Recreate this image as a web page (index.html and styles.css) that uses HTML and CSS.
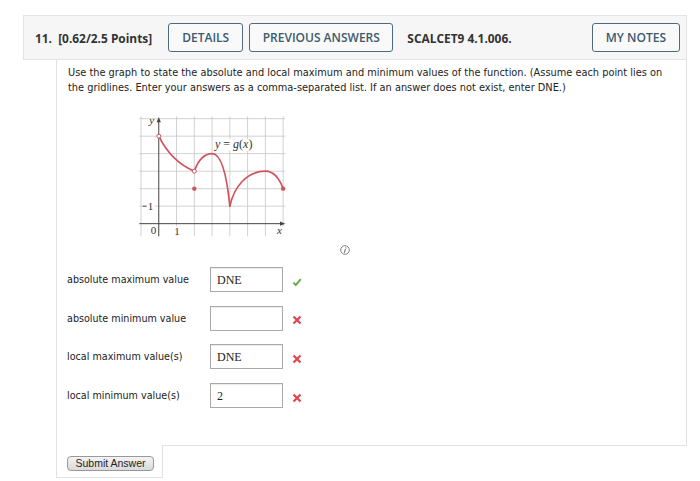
FILE: index.html
```html
<!DOCTYPE html>
<html>
<head>
<meta charset="utf-8">
<link rel="stylesheet" href="styles.css">
</head>
<body>
<div class="page">
  <div class="header">
    <span class="qnum">11.&nbsp; [0.62/2.5 Points]</span>
    <span class="btn btn-details">DETAILS</span>
    <span class="btn btn-prev">PREVIOUS ANSWERS</span>
    <span class="qid">SCALCET9 4.1.006.</span>
    <span class="btn btn-notes">MY NOTES</span>
  </div>
  <div class="content">
    <p class="prompt">Use the graph to state the absolute and local maximum and minimum values of the function. (Assume each point lies on the gridlines. Enter your answers as a comma-separated list. If an answer does not exist, enter DNE.)</p>
    <div class="figure-row">
      <svg class="graph" width="170" height="140" viewBox="0 0 510 420">
        <g stroke="#c8c8c8" stroke-width="2.5">
          <line x1="33" y1="28" x2="33" y2="388"/>
          <line x1="139.6" y1="28" x2="139.6" y2="388"/>
          <line x1="192.9" y1="28" x2="192.9" y2="388"/>
          <line x1="246.2" y1="28" x2="246.2" y2="388"/>
          <line x1="299.5" y1="28" x2="299.5" y2="388"/>
          <line x1="352.8" y1="28" x2="352.8" y2="388"/>
          <line x1="406.1" y1="28" x2="406.1" y2="388"/>
          <line x1="459.4" y1="28" x2="459.4" y2="388"/>
          <line x1="28" y1="35" x2="466" y2="35"/>
          <line x1="28" y1="87.5" x2="466" y2="87.5"/>
          <line x1="28" y1="140" x2="466" y2="140"/>
          <line x1="28" y1="192.5" x2="466" y2="192.5"/>
          <line x1="28" y1="245" x2="466" y2="245"/>
          <line x1="28" y1="297.5" x2="466" y2="297.5"/>
        </g>
        <rect x="252" y="96" width="124" height="36" fill="#fff"/>
        <rect x="44" y="284" width="30" height="28" fill="#fff"/>
        <rect x="58" y="356" width="24" height="28" fill="#fff"/>
        <rect x="128" y="358" width="22" height="28" fill="#fff"/>
        <rect x="436" y="358" width="26" height="28" fill="#fff"/>
        <g stroke="#444" stroke-width="3">
          <line x1="86.3" y1="388" x2="86.3" y2="42"/>
          <line x1="28" y1="350" x2="452" y2="350"/>
          <line x1="38" y1="297.5" x2="50" y2="297.5"/>
        </g>
        <polygon points="86.3,30 80,46 92.6,46" fill="#444"/>
        <polygon points="466,350 450,343.7 450,356.3" fill="#444"/>
        <g font-family="'Liberation Serif', serif" fill="#333" font-size="33">
          <text x="58" y="52" font-style="italic">y</text>
          <text x="255" y="124" font-size="36"><tspan font-style="italic">y</tspan> = <tspan font-style="italic">g</tspan>(<tspan font-style="italic">x</tspan>)</text>
          <text x="53" y="308">1</text>
          <text x="62" y="380">0</text>
          <text x="133" y="383">1</text>
          <text x="441" y="381" font-style="italic">x</text>
        </g>
        <g fill="none" stroke="#d0525a" stroke-width="5" stroke-linecap="round">
          <path d="M86.3 87.5 Q125 165 192.9 192.5"/>
          <path d="M192.9 192.5 Q212 140 246.2 140 Q284 140 299.5 297.5"/>
          <path d="M299.5 297.5 C312 240 350 192.5 406.1 192.5 Q440 192.5 459.4 245"/>
        </g>
        <circle cx="86.3" cy="87.5" r="6" fill="#fff" stroke="#d0525a" stroke-width="3"/>
        <circle cx="192.9" cy="192.5" r="6" fill="#fff" stroke="#d0525a" stroke-width="3"/>
        <circle cx="192.9" cy="245" r="6.5" fill="#d0525a"/>
        <circle cx="459.4" cy="245" r="6.5" fill="#d0525a"/>
      </svg>
      <svg class="info" width="10" height="10" viewBox="0 0 10 10">
        <circle cx="5" cy="5" r="4.3" fill="none" stroke="#777" stroke-width="0.9"/>
        <circle cx="5.9" cy="2.9" r="0.6" fill="#666"/>
        <path d="M5.3 4.4 L4.4 7.4" stroke="#666" stroke-width="1" stroke-linecap="round"/>
      </svg>
    </div>
    <div class="answers">
      <div class="label">absolute maximum value</div>
      <div class="field">DNE</div>
      <svg class="mark" width="10" height="10" viewBox="0 0 10 10"><path d="M1.3 5.6 L3.8 8 L8.8 2.2" fill="none" stroke="#6aac4f" stroke-width="2"/></svg>

      <div class="label">absolute minimum value</div>
      <div class="field"></div>
      <svg class="mark" width="10" height="10" viewBox="0 0 10 10"><path d="M1.5 1.5 L8.5 8.5 M8.5 1.5 L1.5 8.5" fill="none" stroke="#e0454c" stroke-width="2.2"/></svg>

      <div class="label">local maximum value(s)</div>
      <div class="field">DNE</div>
      <svg class="mark" width="10" height="10" viewBox="0 0 10 10"><path d="M1.5 1.5 L8.5 8.5 M8.5 1.5 L1.5 8.5" fill="none" stroke="#e0454c" stroke-width="2.2"/></svg>

      <div class="label">local minimum value(s)</div>
      <div class="field">2</div>
      <svg class="mark" width="10" height="10" viewBox="0 0 10 10"><path d="M1.5 1.5 L8.5 8.5 M8.5 1.5 L1.5 8.5" fill="none" stroke="#e0454c" stroke-width="2.2"/></svg>
    </div>
  </div>
  <div class="submit-tab">
    <span class="submit">Submit Answer</span>
  </div>
</div>
</body>
</html>
```
FILE: styles.css
```css
html, body {
  margin: 0;
  padding: 0;
  background: #fff;
}
.page {
  padding: 15px 13px 0 23px;
}
.header {
  display: flex;
  align-items: center;
  height: 43px;
  background: #f6f6f6;
  border: 1px solid #e4e4e4;
  padding: 0 6px 0 11px;
  font-family: "Open Sans", sans-serif;
  color: #333;
}
.qnum {
  font-weight: 700;
  font-size: 11.9px;
  margin-right: 16px;
}
.qid {
  font-weight: 700;
  font-size: 11.9px;
  margin-left: 14px;
}
.btn {
  display: inline-flex;
  align-items: center;
  box-sizing: border-box;
  height: 29px;
  padding: 0 13px;
  border: 1px solid #4d6a7e;
  border-radius: 3px;
  color: #3c5a6e;
  font-size: 12px;
  font-weight: 600;
  background: #f9f9f9;
}
.btn-prev {
  margin-left: 6px;
  padding: 0 12.5px;
}
.btn-notes {
  margin-left: auto;
}
.content {
  margin-left: 33px;
  border: 1px solid #e3e3e3;
  border-top: none;
  padding: 6px 11px 37px 11px;
  font-family: "DejaVu Sans", Verdana, sans-serif;
  font-size: 9.6px;
  color: #222;
}
.prompt {
  margin: 0;
  font-size: 9.8px;
  line-height: 14.5px;
}
.figure-row {
  display: flex;
  align-items: flex-end;
  margin-top: 12px;
}
.graph {
  display: block;
  margin-left: 62px;
  margin-bottom: 8px;
}
.info {
  display: block;
  margin-left: 40px;
}
.answers {
  display: grid;
  grid-template-columns: 142px 73px 10px;
  column-gap: 0;
  row-gap: 13.7px;
  align-items: center;
  margin-top: 12px;
}
.label {
  margin-left: -1px;
}
.field {
  box-sizing: border-box;
  height: 25px;
  border: 1px solid #a9a9a9;
  box-shadow: inset 0 1px 1px rgba(0,0,0,0.08);
  padding: 2px 6px 0;
  font-family: "Liberation Serif", serif;
  font-size: 12px;
  line-height: 20px;
  color: #222;
}
.mark {
  display: block;
  margin-left: 9px;
  margin-top: 4px;
}
.submit-tab {
  margin-left: 33px;
  margin-top: -1px;
  width: 107px;
  box-sizing: border-box;
  border: 1px solid #e3e3e3;
  border-top: none;
  background: #fff;
  padding: 8px 0 6px 10px;
}
.submit {
  display: inline-flex;
  align-items: center;
  justify-content: center;
  box-sizing: border-box;
  width: 87px;
  height: 15px;
  border: 1px solid #999;
  border-radius: 4px;
  background: linear-gradient(#f4f4f4, #d9d9d9);
  font-family: "Liberation Sans", Arial, sans-serif;
  font-size: 10.5px;
  color: #222;
}
```
